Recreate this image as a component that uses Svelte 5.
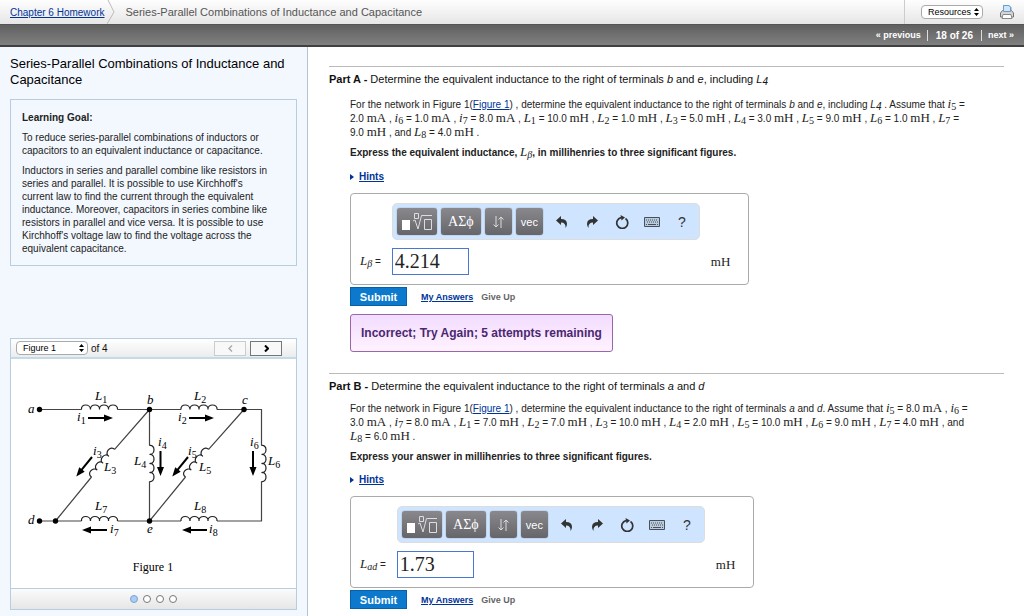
<script lang="ts">
	let figure = $state('Figure 1');
	let resource = $state('Resources');

	const parts = $state([
		{
			id: 'A',
			terminals: ['b', 'e'],
			including: true,
			values: [
				['i', '5', '2.0', 'mA'],
				['i', '6', '1.0', 'mA'],
				['i', '7', '8.0', 'mA'],
				['L', '1', '10.0', 'mH'],
				['L', '2', '1.0', 'mH'],
				['L', '3', '5.0', 'mH'],
				['L', '4', '3.0', 'mH'],
				['L', '5', '9.0', 'mH'],
				['L', '6', '1.0', 'mH'],
				['L', '7', '9.0', 'mH']
			],
			last: ['L', '8', '4.0', 'mH'],
			sub: 'β',
			answer: '4.214',
			feedback: 'Incorrect; Try Again; 5 attempts remaining'
		},
		{
			id: 'B',
			terminals: ['a', 'd'],
			including: false,
			values: [
				['i', '5', '8.0', 'mA'],
				['i', '6', '3.0', 'mA'],
				['i', '7', '8.0', 'mA'],
				['L', '1', '7.0', 'mH'],
				['L', '2', '7.0', 'mH'],
				['L', '3', '10.0', 'mH'],
				['L', '4', '2.0', 'mH'],
				['L', '5', '10.0', 'mH'],
				['L', '6', '9.0', 'mH'],
				['L', '7', '4.0', 'mH']
			],
			last: ['L', '8', '6.0', 'mH'],
			sub: 'ad',
			answer: '1.73',
			feedback: ''
		}
	]);

	// circuit drawing
	const coils = [
		'translate(70.5 50.5)',
		'translate(170 50.5)',
		'translate(70.5 162)',
		'translate(170 162)',
		'translate(138.5 86.5) rotate(90)',
		'translate(250.5 86.5) rotate(90)',
		'translate(80.5 118) rotate(-50)',
		'translate(174.5 118) rotate(-50)'
	];
	const arrows = [
		'translate(77 59)',
		'translate(178 59)',
		'translate(96 171) rotate(180)',
		'translate(196 171) rotate(180)',
		'translate(149.5 92) rotate(90)',
		'translate(242 92) rotate(90)',
		'translate(81 98) rotate(129)',
		'translate(177 98) rotate(129)'
	];
	const dots = [
		[28.5, 50.5],
		[138.5, 50.5],
		[233, 50.5],
		[28.5, 162],
		[44.5, 162],
		[138.5, 162]
	];
	const labels: [string, string, number, number][] = [
		['L', '1', 84, 41],
		['L', '2', 183, 41],
		['L', '3', 93, 112],
		['L', '4', 123, 106],
		['L', '5', 188, 112],
		['L', '6', 257, 106],
		['L', '7', 84, 151],
		['L', '8', 183, 151],
		['i', '1', 66, 62],
		['i', '2', 167, 62],
		['i', '3', 82, 96],
		['i', '4', 147, 87],
		['i', '5', 177, 96],
		['i', '6', 239, 87],
		['i', '7', 99, 174],
		['i', '8', 198, 174],
		['a', '', 17, 54],
		['b', '', 136, 45],
		['c', '', 231, 45],
		['d', '', 17, 165],
		['e', '', 136, 174]
	];
</script>

{#snippet sym(name: string, sub: string)}
	<span class="math"><i>{name}</i><sub>{#if isNaN(+sub)}<i>{sub}</i>{:else}{sub}{/if}</sub></span>
{/snippet}

{#snippet updown()}
	<svg class="updown" width="5" height="8" viewBox="0 0 5 8"><path d="M0 3L2.5 0L5 3zM0 5L2.5 8L5 5z" /></svg>
{/snippet}

<header class="crumbs">
	<a href="#homework">Chapter 6 Homework</a>
	<svg class="chevron" width="8" height="24" viewBox="0 0 8 24">
		<path d="M1 0L7 12L0 24" fill="none" stroke="#bbb" />
	</svg>
	<span class="crumb-title">Series-Parallel Combinations of Inductance and Capacitance</span>
	<div class="resources">
		<div class="select resource-select">
			<select aria-label="Resources" bind:value={resource}>
				<option>Resources</option>
			</select>
			{@render updown()}
		</div>
		<button class="print" aria-label="Print">
			<svg width="14" height="14" viewBox="0 0 14 14">
				<path d="M3.5 7V.5H9L11 2.5V7z" fill="#cfe6fa" stroke="#6f9cc5" />
				<path d="M.5 8L2.5 5.5H11.5L13.5 8V12H.5z" fill="#d5d5d5" stroke="#777" />
				<path d="M3.5 6.5V.5H9L10.500 2.500V6.500z" fill="#cfe6fa" stroke="#6f9cc5" />
				<path d="M3 9.5H11L12 13.5H2z" fill="#fff" stroke="#888" />
			</svg>
		</button>
	</div>
</header>

<nav class="pager">
	<a href="#previous">« previous</a>
	<span class="count">18 of 26</span>
	<a href="#next">next »</a>
</nav>

<div class="layout">
	<aside>
		<h1>Series-Parallel Combinations of Inductance and Capacitance</h1>
		<section class="goal">
			<h2>Learning Goal:</h2>
			<p>To reduce series-parallel combinations of inductors or capacitors to an equivalent inductance or capacitance.</p>
			<p>
				Inductors in series and parallel combine like resistors in series and parallel. It is possible to use Kirchhoff's
				current law to find the current through the equivalent inductance. Moreover, capacitors in series combine like
				resistors in parallel and vice versa. It is possible to use Kirchhoff's voltage law to find the voltage across the
				equivalent capacitance.
			</p>
		</section>

		<section class="figure" id="figure">
			<div class="figure-bar">
				<div class="select figure-select">
					<select aria-label="Figure" bind:value={figure}>
						{#each [1, 2, 3, 4] as n}
							<option>Figure {n}</option>
						{/each}
					</select>
					{@render updown()}
				</div>
				<span class="of">of 4</span>
				<button class="step" disabled aria-label="Previous figure">
					<svg width="5" height="7" viewBox="0 0 5 7"><path d="M4 .5L1 3.5L4 6.5" /></svg>
				</button>
				<button class="step" aria-label="Next figure">
					<svg width="5" height="7" viewBox="0 0 5 7"><path d="M1 .5L4 3.5L1 6.5" /></svg>
				</button>
			</div>
			<svg class="circuit" viewBox="0 0 285 229">
				<g class="wire">
					<path d="M28.5 50.5H70.5M106.5 50.5H170M206 50.5H250.5V86.5M250.5 122.5V162H206M170 162H106.5M70.5 162H28.5" />
					<path d="M138.5 50.5V86.5M138.5 122.5V162" />
					<path d="M138.5 50.5L103.6 90.4M80.5 118L44.5 162M233 50.5L197.6 90.4M174.5 118L138.5 162" />
					{#each coils as transform}
						<path class="coil" {transform} d="M0 0C-1-6 9-6 9 0C8-6 19-6 18 0C17-6 28-6 27 0C26-6 37-6 36 0" />
					{/each}
				</g>
				{#each arrows as transform}
					<path {transform} d="M0-1H16V-3.5L25 0L16 3.5V1H0z" />
				{/each}
				{#each dots as [cx, cy]}
					<circle {cx} {cy} r="2.7" />
				{/each}
				{#each labels as [name, sub, x, y]}
					<text {x} {y} class="label">{name}<tspan class="sub" dy="3">{sub}</tspan></text>
				{/each}
				<text x="142" y="212" class="caption">Figure 1</text>
			</svg>
			<div class="figure-dots">
				{#each [1, 2, 3, 4] as n}
					<button class:current={figure === 'Figure ' + n} aria-label="Figure {n}" onclick={() => (figure = 'Figure ' + n)}></button>
				{/each}
			</div>
		</section>
	</aside>

	<main>
		{#each parts as part}
			<section class="part">
				<h2>
					<b>Part {part.id} -</b> Determine the equivalent inductance to the right of terminals
					<i>{part.terminals[0]}</i> and <i>{part.terminals[1]}</i>{#if part.including}, including <i>L<sub>4</sub></i>{/if}
				</h2>
				<div class="body">
					<p class="given">
						For the network in Figure 1(<a href="#figure">Figure 1</a>) , determine the equivalent inductance to the right of
						terminals <i>{part.terminals[0]}</i> and <i>{part.terminals[1]}</i>{#if part.including}, including
							<i>L<sub>4</sub></i>&nbsp;{/if}. Assume that
						{#each part.values as [name, sub, value, unit]}
							{@render sym(name, sub)}&nbsp;= {value}&nbsp;<span class="math">{unit}</span>&nbsp;,{' '}
						{/each}
						and
						<span class="last">
							{@render sym(part.last[0], part.last[1])} = {part.last[2]} <span class="math">{part.last[3]}</span> .
						</span>
					</p>
					<p class="express">
						{#if part.including}
							Express the equivalent inductance, {@render sym('L', part.sub)}, in millihenries to three significant figures.
						{:else}
							Express your answer in millihenries to three significant figures.
						{/if}
					</p>
					<a class="hints" href="#hints">
						<svg width="4" height="6" viewBox="0 0 4 6"><path d="M0 0L4 3L0 6z" /></svg>
						<span>Hints</span>
					</a>

					<div class="panel">
						<div class="toolbar">
							<button class="key wide" aria-label="Templates">
								<svg width="32" height="20" viewBox="0 0 32 20" fill="none" stroke="#ddd">
									<path d="M1 8H9V18H1z" fill="#fff" stroke="none" />
									<path d="M13.5 1.5H17.5V6.5H13.5zM12 9L14 8L17 17L20.5 3.5H31M23.5 7.5H30.5V17.5H23.5z" />
								</svg>
							</button>
							<button class="key wide greek">ΑΣϕ</button>
							<button class="key" aria-label="Subscript and superscript">
								<svg width="11" height="12" viewBox="0 0 11 12" fill="none" stroke="#ddd">
									<path d="M3 0V11M.5 8.5L3 11L5.5 8.5M8 12V1M5.5 3.5L8 1L10.5 3.5" />
								</svg>
							</button>
							<button class="key">vec</button>
							<div class="tools">
								<button aria-label="Undo">
									<svg width="12" height="12" viewBox="0 0 12 12"><path d="M0 4.5L5 0V3Q11 3 11 8Q11 10 9.5 12Q10 6.5 5 6.5V9z" /></svg>
								</button>
								<button aria-label="Redo">
									<svg width="12" height="12" viewBox="0 0 12 12"><path d="M12 4.5L7 0V3Q1 3 1 8Q1 10 2.5 12Q2 6.5 7 6.5V9z" /></svg>
								</button>
								<button aria-label="Reset">
									<svg width="14" height="14" viewBox="0 0 14 14">
										<path d="M10.5 3.5A5.5 5.5 0 1 1 6 2.600" fill="none" stroke="#333" stroke-width="1.7" />
										<path d="M5.500 0L10 2.500L6.500 5.500z" />
									</svg>
								</button>
								<button aria-label="Keyboard">
									<svg width="16" height="10" viewBox="0 0 16 10" stroke="#45505c">
										<path d="M.5.5H15.5V9.5H.5z" fill="#b9cbdd" />
										<path d="M2 3H14M3 5H14" fill="none" stroke-dasharray="1 1" />
										<path d="M2 7.5H3M4 7.5H12M13 7.5H14" fill="none" />
									</svg>
								</button>
								<button class="help" aria-label="Help">?</button>
							</div>
						</div>
						<label for="answer-{part.id}">{@render sym('L', part.sub)} =</label>
						<input id="answer-{part.id}" type="text" bind:value={part.answer} />
						<span class="unit math">mH</span>
					</div>

					<div class="actions">
						<button class="submit">Submit</button>
						<a href="#answers">My Answers</a>
						<button class="give-up">Give Up</button>
					</div>
					{#if part.feedback}
						<div class="feedback">{part.feedback}</div>
					{/if}
				</div>
			</section>
		{/each}
	</main>
</div>

<style>
	:global(body) {
		margin: 0;
		background: #fff;
		color: #222;
		font-family: 'Liberation Sans', Arial, sans-serif;
		font-size: 10px;
	}

	:global(#app) {
		display: flex;
		flex-direction: column;
		min-height: 100vh;
	}

	h1,
	h2,
	p {
		margin: 0;
		font-weight: normal;
	}

	a {
		color: #039;
	}

	button {
		padding: 0;
		border: 0;
		background: none;
		color: inherit;
		font-family: inherit;
		cursor: pointer;
	}

	svg {
		display: block;
	}

	.crumbs {
		display: flex;
		align-items: center;
		height: 24px;
		padding-left: 10px;
		background: linear-gradient(#fefefe, #e6e6e6);
	}

	.chevron {
		margin: 0 10px 0 3px;
	}

	.crumb-title {
		color: #555;
		font-size: 11px;
	}

	.resources {
		display: flex;
		align-items: center;
		align-self: stretch;
		gap: 17px;
		margin-left: auto;
		padding: 0 10px 0 16px;
		border-left: 1px solid #ccc;
	}

	.select {
		display: flex;
		align-items: center;
		position: relative;
		box-sizing: border-box;
		height: 14px;
		border: 1px solid #aaa;
		border-radius: 4px;
		background: #fff;
	}

	.select select {
		width: 100%;
		height: 12px;
		padding: 0 10px 0 6px;
		border: 0;
		background: none;
		appearance: none;
		color: #000;
		font-family: inherit;
		font-size: 9px;
	}

	.updown {
		position: absolute;
		right: 3px;
		pointer-events: none;
	}

	.resource-select {
		width: 62px;
	}

	.figure-select {
		width: 72px;
	}

	.pager {
		display: flex;
		align-items: center;
		justify-content: flex-end;
		box-sizing: border-box;
		height: 23px;
		padding-right: 10px;
		border-top: 1px solid #555;
		border-bottom: 2px solid #404040;
		background: linear-gradient(#606060, #808080);
		color: #fff;
		font-size: 10px;
		font-weight: bold;
	}

	.pager a {
		color: #fff;
		font-size: 9px;
		text-decoration: none;
	}

	.count {
		margin: 0 6px;
		padding: 0 8px;
		border: solid #ddd;
		border-width: 0 1px;
	}

	.layout {
		display: flex;
		flex: 1;
	}

	aside {
		flex: none;
		box-sizing: border-box;
		width: 30%;
		min-width: 308px;
		padding: 9px 10px 0;
		border-right: 1px solid #b4c4d6;
		background: #f3f8ff;
	}

	h1 {
		color: #000;
		font-size: 13px;
		line-height: 16px;
	}

	.goal {
		margin-top: 11px;
		padding: 11px 22px 10px 11px;
		border: 1px solid #b8cde0;
		line-height: 13px;
	}

	.goal h2 {
		font-size: 10px;
		font-weight: bold;
		line-height: 13px;
	}

	.goal p {
		margin-top: 7px;
	}

	.figure {
		margin-top: 72px;
		border: 1px solid #b8cde0;
		background: #fff;
	}

	.figure-bar {
		display: flex;
		align-items: center;
		height: 18px;
		padding: 0 14px 0 5px;
		border-bottom: 2px solid #c3daea;
		background: linear-gradient(#fff, #ececec);
	}

	.of {
		margin: 0 auto 0 3px;
		color: #111;
	}

	.step {
		display: flex;
		align-items: center;
		justify-content: center;
		box-sizing: border-box;
		width: 32px;
		height: 15px;
		margin-left: 4px;
		border: 1px solid #777;
		background: #f8f8f8;
	}

	.step path {
		fill: none;
		stroke: #000;
		stroke-width: 2;
	}

	.step:disabled {
		border-color: #ccc;
	}

	.step:disabled path {
		stroke: #aaa;
		stroke-width: 1.5;
	}

	.circuit {
		width: 100%;
	}

	.wire path {
		fill: none;
		stroke: #444;
		stroke-width: 1.2;
	}

	.wire .coil {
		stroke: #222;
	}

	.label {
		font-family: 'Liberation Serif', serif;
		font-size: 13px;
		font-style: italic;
	}

	.sub {
		font-size: 10px;
		font-style: normal;
	}

	.caption {
		font-family: 'Liberation Serif', serif;
		font-size: 12px;
		text-anchor: middle;
	}

	.figure-dots {
		display: flex;
		align-items: center;
		justify-content: center;
		gap: 5px;
		height: 19px;
		padding-bottom: 1px;
		border-top: 1px solid #b8cde0;
		background: linear-gradient(#fbfbfb, #e6e6e6);
	}

	.figure-dots button {
		box-sizing: border-box;
		width: 8px;
		height: 8px;
		border: 1px solid #777;
		border-radius: 50%;
		background: #fff;
	}

	.figure-dots .current {
		border-color: #7ba2cf;
		background: #a9cdf7;
	}

	main {
		flex: 1;
		min-width: 0;
		padding: 19px 20px 0 21px;
	}

	.part {
		padding-top: 5px;
		border-top: 1px solid #bbb;
	}

	.part + .part {
		margin-top: 21px;
	}

	.part > h2 {
		color: #111;
		font-size: 11px;
		line-height: 14px;
	}

	sub {
		font-size: 10px;
		line-height: 0;
		vertical-align: -2px;
	}

	.part > h2 sub {
		line-height: 14px;
	}

	.express sub {
		line-height: 12px;
	}

	.math {
		font-family: 'Liberation Serif', serif;
		font-size: 13px;
		font-weight: normal;
		line-height: 0;
	}

	.body {
		padding-left: 21px;
	}

	.given {
		margin-top: 9px;
		padding-right: 16px;
		line-height: 14px;
	}

	.last {
		white-space: nowrap;
	}

	.express {
		margin-top: 6px;
		font-weight: bold;
		line-height: 14px;
	}

	.hints {
		display: flex;
		align-items: center;
		gap: 5px;
		width: max-content;
		margin: 10px 0;
		font-weight: bold;
		line-height: 12px;
		text-decoration: none;
	}

	.hints span {
		text-decoration: underline;
	}

	.hints path {
		fill: #039;
	}

	.panel {
		display: grid;
		grid-template-columns: auto auto auto;
		align-items: center;
		gap: 8px 11px;
		width: max-content;
		padding: 9px 18px 9px 9px;
		border: 1px solid #aaa;
		border-radius: 4px;
	}

	.toolbar {
		display: flex;
		grid-column: 2;
		gap: 4px;
		padding: 4px;
		border: 1px solid #ddd;
		border-radius: 5px;
		background: #cfe5ff;
	}

	.key {
		display: flex;
		align-items: center;
		justify-content: center;
		width: 27px;
		height: 27px;
		border-radius: 3px;
		background: linear-gradient(#88888d, #65656a);
		box-shadow: 0 0 1px #444;
		color: #fff;
		font-size: 11px;
	}

	.wide {
		width: 40px;
	}

	.greek {
		font-family: 'Liberation Serif', serif;
		font-size: 14px;
	}

	.tools {
		display: flex;
		gap: 4px;
		margin-left: 2px;
	}

	.tools button {
		display: flex;
		align-items: center;
		justify-content: center;
		width: 26px;
		color: #333;
	}

	.tools svg {
		fill: #333;
	}

	.tools .help {
		font-size: 14px;
	}

	label {
		grid-column: 1;
		font-size: 10px;
	}

	.panel input {
		box-sizing: border-box;
		width: 77px;
		height: 27px;
		padding: 0 2px;
		border: 1px solid #4a78d0;
		background: #fff;
		color: #222;
		font-family: 'Liberation Serif', serif;
		font-size: 20px;
	}

	.actions {
		display: flex;
		align-items: center;
		gap: 8px;
		margin-top: 2px;
		font-size: 9px;
		font-weight: bold;
	}

	.submit {
		box-sizing: border-box;
		width: 57px;
		height: 19px;
		margin-right: 6px;
		border: 1px solid #0661a8;
		background: #0c79cd;
		color: #fff;
		font-size: 11px;
		font-weight: bold;
	}

	.give-up {
		color: #666;
		font-size: 9px;
		font-weight: bold;
	}

	.feedback {
		width: max-content;
		margin-top: 8px;
		padding: 11px 10px;
		border: 1px solid #96a;
		border-radius: 3px;
		background: linear-gradient(#f2dcff, #fff2ff);
		color: #4b2770;
		font-size: 12px;
		font-weight: bold;
		line-height: 14px;
	}
</style>
